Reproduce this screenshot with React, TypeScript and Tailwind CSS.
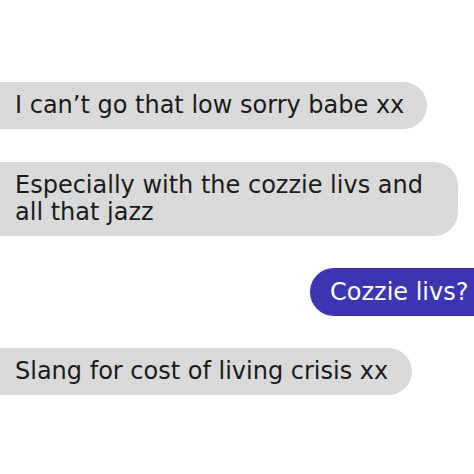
import React from 'react';

const Bubble: React.FC<{ children: React.ReactNode; mine?: boolean; width?: string }> = ({ children, mine, width }) => {
  if (mine) {
    return (
      <div className="flex justify-end">
        <div className="bg-[#3b35b2] text-white rounded-l-[24px] pl-[20px] w-[164px] h-[48px] flex items-center whitespace-nowrap">
          {children}
        </div>
      </div>
    );
  }
  return (
    <div className="flex justify-start -ml-[24px]">
      <div className={`bg-[#d9d9d9] text-[#1b1b1b] rounded-[24px] pl-[39px] py-[10px] leading-[27px] whitespace-nowrap ${width ?? ''}`}>
        {children}
      </div>
    </div>
  );
};

export default function App() {
  return (
    <div
      className="w-[474px] h-[474px] bg-white overflow-hidden pt-[82px] flex flex-col text-[24px]"
      style={{ fontFamily: '"DejaVu Sans", Inter, sans-serif' }}
    >
      <Bubble width="w-[451px]">I can’t go that low sorry babe xx</Bubble>
      <div className="h-[33px]" />
      <Bubble width="w-[482px]">
        Especially with the cozzie livs and
        <br />
        all that jazz
      </Bubble>
      <div className="h-[32px]" />
      <Bubble mine>Cozzie livs?</Bubble>
      <div className="h-[32px]" />
      <Bubble width="w-[436px]">Slang for cost of living crisis xx</Bubble>
    </div>
  );
}
